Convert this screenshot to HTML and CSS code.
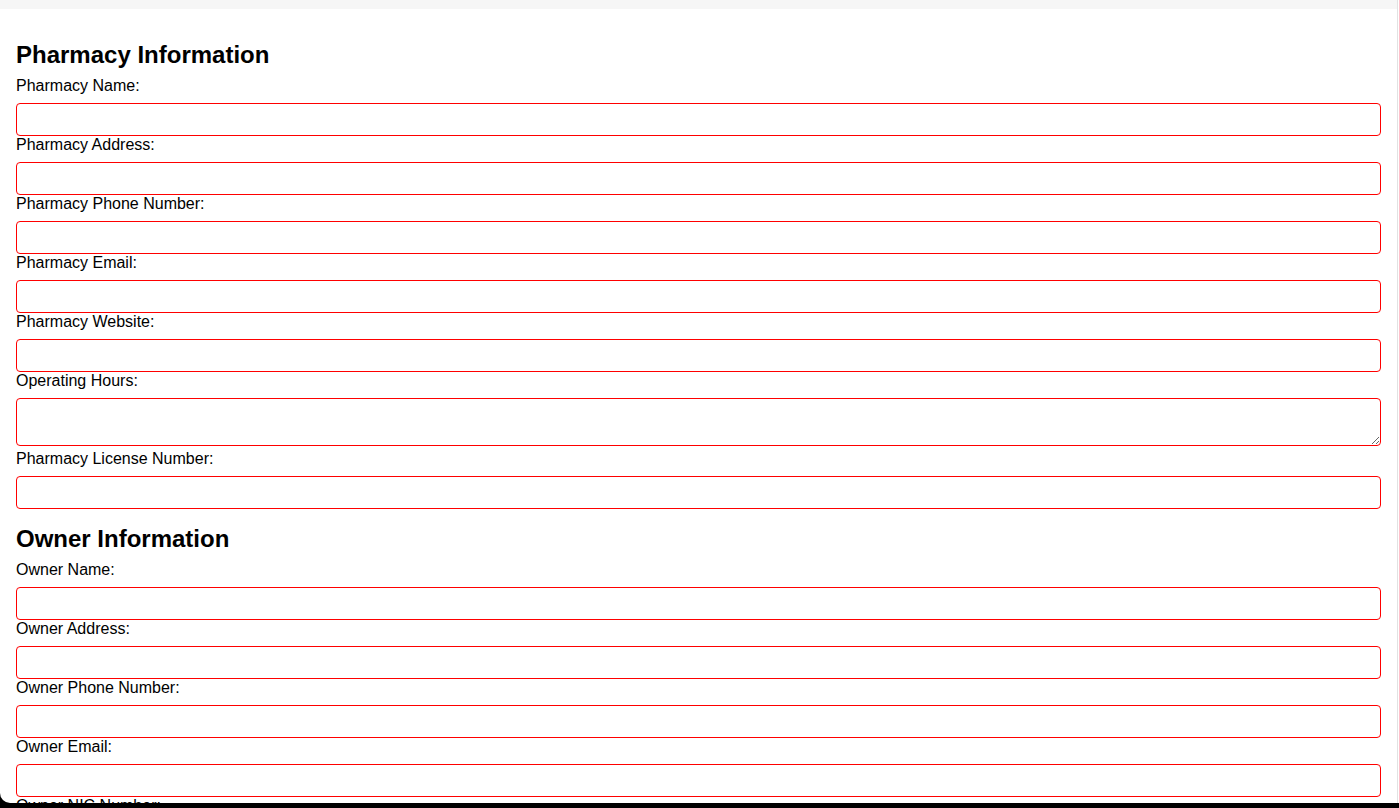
FILE: index.html
```html
<!DOCTYPE html>
<html lang="en">
<head>
    <meta charset="UTF-8">
    <meta name="viewport" content="width=device-width, initial-scale=1.0">
    <title>Pharmacy Registration</title>
    <link rel="stylesheet" href="styles.css">
</head>
<body>

<div class="window">
    <div class="page">
        <div class="topbar"></div>

        <form class="reg-form">
            <h2>Pharmacy Information</h2>

            <label for="pharmacyName">Pharmacy Name:</label>
            <input type="text" id="pharmacyName" name="pharmacyName" required>

            <label for="pharmacyAddress">Pharmacy Address:</label>
            <input type="text" id="pharmacyAddress" name="pharmacyAddress" required>

            <label for="pharmacyPhone">Pharmacy Phone Number:</label>
            <input type="tel" id="pharmacyPhone" name="pharmacyPhone" required>

            <label for="pharmacyEmail">Pharmacy Email:</label>
            <input type="email" id="pharmacyEmail" name="pharmacyEmail" required>

            <label for="pharmacyWebsite">Pharmacy Website:</label>
            <input type="url" id="pharmacyWebsite" name="pharmacyWebsite">

            <label for="operatingHours">Operating Hours:</label>
            <textarea id="operatingHours" name="operatingHours" rows="2"></textarea>

            <label for="licenseNumber">Pharmacy License Number:</label>
            <input type="text" id="licenseNumber" name="licenseNumber" required>

            <h2>Owner Information</h2>

            <label for="ownerName">Owner Name:</label>
            <input type="text" id="ownerName" name="ownerName" required>

            <label for="ownerAddress">Owner Address:</label>
            <input type="text" id="ownerAddress" name="ownerAddress" required>

            <label for="ownerPhone">Owner Phone Number:</label>
            <input type="tel" id="ownerPhone" name="ownerPhone" required>

            <label for="ownerEmail">Owner Email:</label>
            <input type="email" id="ownerEmail" name="ownerEmail" required>

            <label for="ownerNic">Owner NIC Number:</label>
            <input type="text" id="ownerNic" name="ownerNic" required>

            <button type="submit">Register</button>
        </form>
    </div>
    <div class="scrollbar"></div>
</div>

</body>
</html>
```

FILE: styles.css
```css
body {
    margin: 0;
    padding: 0;
    background-color: #000;
    font-family: "Liberation Sans", Arial, sans-serif;
    color: #000;
}

.window {
    display: flex;
    height: 803px;
    overflow: hidden;
    background-color: #fff;
    border-bottom-left-radius: 10px;
}

.page {
    flex: 1;
    min-width: 0;
}

.scrollbar {
    width: 1px;
    border-left: 1px solid #e2e2e2;
    background-color: #fff;
}

.topbar {
    height: 9px;
    background-color: #f6f6f6;
}

.reg-form {
    padding: 16px 16px 40px;
}

.reg-form h2 {
    font-size: 24px;
    font-weight: bold;
    margin: 16px 0 8px;
}

.reg-form label {
    display: block;
    font-size: 16px;
    margin-bottom: 8px;
}

.reg-form input,
.reg-form textarea {
    width: 100%;
    box-sizing: border-box;
    padding: 8px;
    border: 1px solid red;
    border-radius: 4px;
    font-family: "Liberation Sans", Arial, sans-serif;
    font-size: 13.33px;
}

.reg-form input {
    display: block;
    height: 33px;
}

.reg-form textarea {
    height: 48px;
}

.reg-form button {
    margin-top: 16px;
    padding: 10px 20px;
    border: none;
    border-radius: 4px;
    background-color: #333;
    color: #fff;
}
```
